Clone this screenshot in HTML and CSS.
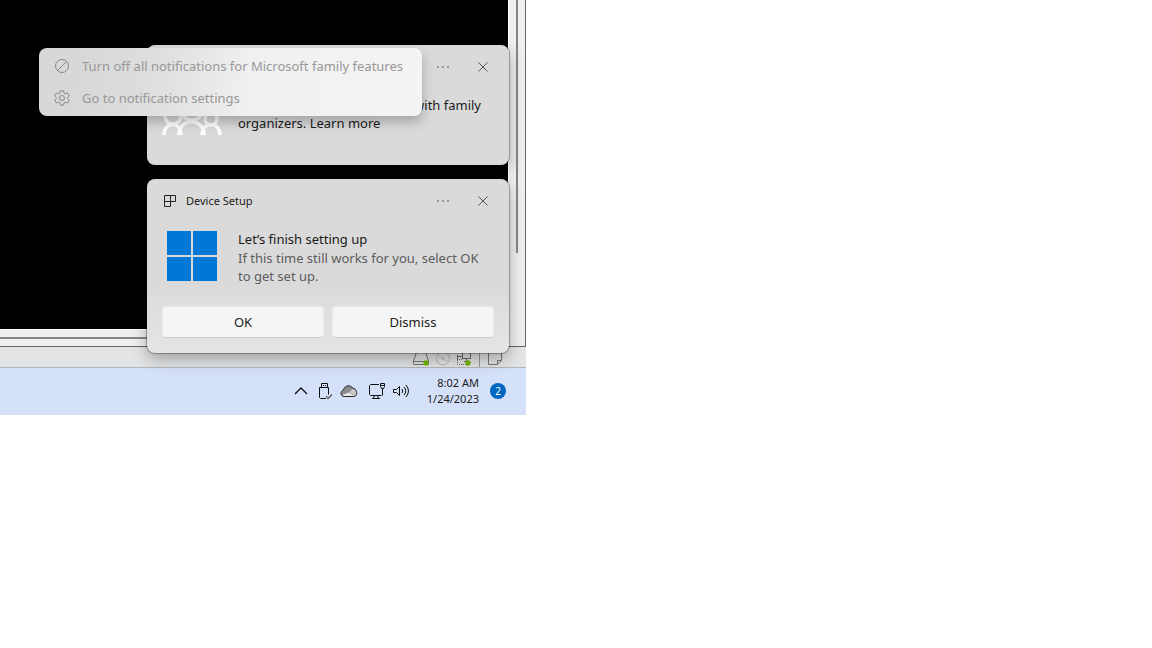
FILE: index.html
```html
<!DOCTYPE html>
<html lang="en">
<head>
  <meta charset="UTF-8" />
  <title>Desktop notifications</title>
  <link rel="stylesheet" href="styles.css">
</head>
<body>

  <div class="desktop">
    <!-- VM window -->
    <div class="vm">
      <div class="console"></div>
      <div class="vscroll"><div class="vthumb"></div></div>
      <div class="hscroll"><div class="hthumb"></div></div>
    </div>

    <div class="statusbar">
      <svg width="18" height="16" viewBox="0 0 18 16" fill="none" stroke="#777">
        <path d="M4.500 1h9l3 9v3.500h-15V10zM1.500 10.500h15" />
        <circle cx="14" cy="12" r="2.700" fill="#76b900" stroke="none" />
      </svg>
      <svg width="16" height="16" viewBox="0 0 16 16" fill="none" stroke="#b8b8b8">
        <circle cx="8" cy="7.500" r="6.500" /><circle cx="8" cy="7.500" r="1" />
        <path d="M4 5l2 1M10 9l2 1" />
      </svg>
      <svg width="16" height="16" viewBox="0 0 16 16" fill="none" stroke="#666">
        <rect x="6.500" y="1.500" width="8" height="6" />
        <path d="M10.500 7.500v3M8 10.500h5M1 5.500h5M1.500 4v3" />
        <path d="M1.500 7v6.500h9M1 8.500h6" stroke-dasharray="1 1" />
        <circle cx="12" cy="12" r="2.700" fill="#76b900" stroke="none" />
      </svg>
      <span class="divider"></span>
      <svg width="16" height="16" viewBox="0 0 16 16" fill="none" stroke="#777">
        <path d="M1.500 1.500h13v8l-4 4h-9zM14.500 9.500h-4v4" />
      </svg>
    </div>

    <div class="taskbar">
      <button class="tray" aria-label="Show hidden icons">
        <svg width="16" height="20" viewBox="0 0 16 20" fill="none" stroke="#111" stroke-width="1.300"><path d="M2 13l6-6 6 6" /></svg>
      </button>
      <button class="tray" aria-label="USB device">
        <svg width="16" height="20" viewBox="0 0 16 20" fill="none" stroke="#111">
          <path d="M4.500 6.500v-4h6v4M9 17.500H3.500l-1-1v-10h9v7" />
          <path d="M6 4.500h1M8 4.500h1" />
          <path d="M9 15l2 2.500 4-4" stroke="#555" stroke-width="1.200" />
        </svg>
      </button>
      <button class="tray" aria-label="OneDrive">
        <svg width="18" height="20" viewBox="0 0 18 20">
          <path d="M4.500 15.500C0 15.500 0 10 3.500 9 5 3.500 11 4 12.500 7c5.500 1 5.500 8.500 1 8.500z" fill="#8c8c8c" stroke="#222" />
          <path d="M2.500 14l6-2.500 6 3.300q-.500.200-1.500.200H4.500q-1.200 0-2-1z" fill="#e8e8e8" />
          <path d="M9 11.500l3.500-3.500c4 .500 4.500 4.500 2.500 6.500z" fill="#c8c8c8" />
        </svg>
      </button>
      <button class="tray network" aria-label="Network">
        <svg width="18" height="20" viewBox="0 0 18 20" fill="none" stroke="#111">
          <path d="M11 3.500H2.500l-1 1v9l1 1h11M6 14.500v3M10 14.500v3M4 17.500h8" />
          <path d="M12.500 2.500h4v3l-1 2h-2l-1-2zM12.500 4.500h4M14.500 7.500v7" />
        </svg>
      </button>
      <button class="tray" aria-label="Volume">
        <svg width="18" height="20" viewBox="0 0 18 20" fill="none" stroke="#111">
          <path d="M1.500 8.500h3l3-3v9l-3-3h-3z" />
          <path d="M10 8q1.500 2 0 4M12 6q3.500 4 0 8M14 4q5 6 0 12" />
        </svg>
      </button>
      <button class="clock">8:02 AM<br>1/24/2023</button>
      <button class="count">2</button>
    </div>

    <!-- Toasts -->
    <div class="toasts">
      <section class="toast family">
        <header class="toast-head">
          <button class="icon-btn" aria-label="Options">
            <svg width="14" height="14" viewBox="0 0 14 14" fill="#777"><circle cx="2" cy="7" r=".900" /><circle cx="7" cy="7" r=".900" /><circle cx="12" cy="7" r=".900" /></svg>
          </button>
          <button class="icon-btn" aria-label="Close">
            <svg width="14" height="14" viewBox="0 0 14 14" stroke="#555"><path d="M2.500 2.500l9 9M11.500 2.500l-9 9" /></svg>
          </button>
        </header>
        <div class="toast-body">
          <svg class="people" width="60" height="40" viewBox="0 0 60 40" fill="none" stroke="#fff" stroke-width="3.500">
            <circle cx="11" cy="21" r="8" /><circle cx="30" cy="14" r="11" /><circle cx="49" cy="24" r="6" />
            <path d="M2 40c0-14 17-14 17 0M17 40c0-18 25-18 25 0M40 40c0-14 18-14 18 0" />
          </svg>
          <p class="family-text"><span class="line-end">with family</span> organizers. Learn more</p>
        </div>
      </section>

      <section class="toast setup">
        <header class="toast-head">
          <svg class="app-icon" width="14" height="14" viewBox="0 0 14 14" fill="none" stroke="#222"><path d="M1.500 1.500h11v6h-5v5h-6zM7.500 1.500v6h-6" /></svg>
          <span class="app-name">Device Setup</span>
          <button class="icon-btn" aria-label="Options">
            <svg width="14" height="14" viewBox="0 0 14 14" fill="#777"><circle cx="2" cy="7" r=".900" /><circle cx="7" cy="7" r=".900" /><circle cx="12" cy="7" r=".900" /></svg>
          </button>
          <button class="icon-btn" aria-label="Close">
            <svg width="14" height="14" viewBox="0 0 14 14" stroke="#555"><path d="M2.500 2.500l9 9M11.500 2.500l-9 9" /></svg>
          </button>
        </header>
        <div class="toast-body">
          <svg class="logo" width="60" height="50" viewBox="0 0 60 50" fill="#0078d7"><path d="M5 0h24v24H5zM31 0h24v24H31zM5 26h24v24H5zM31 26h24v24H31z" /></svg>
          <div class="setup-text">
            <h2>Let’s finish setting up</h2>
            <p>If this time still works for you, select OK to get set up.</p>
          </div>
        </div>
        <div class="actions">
          <button>OK</button>
          <button>Dismiss</button>
        </div>
      </section>
    </div>

    <!-- Options menu over the first toast -->
    <div class="menu">
      <button>
        <svg width="16" height="16" viewBox="0 0 16 16" fill="none" stroke="#888"><circle cx="8" cy="8" r="6.500" /><path d="M3.500 12.500l9-9" /></svg>
        Turn off all notifications for Microsoft family features
      </button>
      <button>
        <svg width="16" height="16" viewBox="0 0 16 16" fill="none" stroke="#888" stroke-linejoin="round">
          <path d="M6.400.800h3.200l.500 2.200 1.400.800 2.200-.700 1.600 2.800L13.700 7.400v1.200l1.600 1.500-1.600 2.800-2.200-.700-1.400.800-.500 2.200H6.400L5.900 13l-1.400-.800-2.200.700L.700 10.100l1.600-1.500V7.400L.700 5.900l1.600-2.800 2.200.700L5.900 3z" />
          <circle cx="8" cy="8" r="2.500" />
        </svg>
        Go to notification settings
      </button>
    </div>
  </div>

</body>
</html>
```
FILE: styles.css
```css
* {
  margin: 0; padding: 0;
  box-sizing: border-box;
}
body {
  background-color: white;
  font-family: "Noto Sans", "Open Sans", sans-serif;
  font-size: 13px;
  line-height: 18px;
  color: #1b1b1b;
}
button {
  border: none;
  background: none;
  font: inherit;
  color: inherit;
}
svg {
  display: block;
  flex: none;
}
.desktop {
  position: relative;
  max-width: 526px;
  overflow: hidden;
}

/* VM window */
.vm {
  display: grid;
  grid-template-columns: 1fr 17px;
  grid-template-rows: 329px 17px;
  background-color: #efefef;
  border-right: 1px solid #666;
  border-bottom: 1px solid #666;
}
.console {
  background-color: black;
}
.vscroll, .hscroll {
  border: 0 solid white;
}
.vscroll {
  border-left-width: 1px;
  padding-left: 7px;
}
.vthumb {
  width: 2px;
  height: 253px;
  background-color: #858585;
}
.hscroll {
  border-top-width: 1px;
  padding-top: 7px;
}
.hthumb {
  width: 60%;
  height: 2px;
  background-color: #858585;
}
.statusbar {
  display: flex;
  justify-content: flex-end;
  align-items: flex-end;
  gap: 5px;
  height: 21px;
  padding: 0 23px 0 0;
  background-color: #e3e4e5;
  border-bottom: 1px solid #b0b6ba;
}
.divider {
  width: 1px;
  height: 18px;
  margin: 0 2px;
  background-color: #999;
}

/* Taskbar */
.taskbar {
  display: flex;
  justify-content: flex-end;
  align-items: center;
  height: 47px;
  padding: 0 20px 2px 0;
  background-color: #d5e1f8;
}
.tray {
  display: flex;
  justify-content: center;
  width: 24px;
}
.network {
  margin-left: 4px;
}
.clock {
  margin: 0 11px 0 14px;
  font-size: 11px;
  line-height: 16px;
  text-align: right;
}
.count {
  width: 16px;
  height: 16px;
  border-radius: 50%;
  background-color: #0067c0;
  color: white;
  font-size: 10px;
  line-height: 16px;
}

/* Toasts */
.toasts {
  position: absolute;
  top: 45px;
  right: 17px;
  width: 362px;
  display: grid;
  gap: 14px;
}
.toast {
  padding: 0 15px 15px;
  border-radius: 8px;
  background-color: #dadada;
  box-shadow: 0 0 1px 1px rgba(0, 0, 0, 0.3), 0 6px 16px rgba(0, 0, 0, 0.3);
}
.setup {
  background-image: linear-gradient(#dadada 60%, #e5e5e5);
}
.toast-head {
  display: flex;
  justify-content: flex-end;
  align-items: center;
  height: 44px;
}
.app-icon {
  margin-left: 1px;
}
.app-name {
  flex: 1;
  margin-left: 9px;
  font-size: 11px;
}
.icon-btn {
  display: flex;
  justify-content: center;
  width: 24px;
}
.icon-btn + .icon-btn {
  margin-left: 16px;
}
.toast-head .icon-btn:last-child {
  margin-right: -1px;
}
.toast-body {
  display: flex;
  gap: 16px;
  padding-top: 6px;
}
.toast-body h2 {
  font-size: 13px;
  font-weight: normal;
  line-height: 20px;
}
.toast-body p {
  color: #5c5c5c;
}
.toast-body .family-text {
  flex: 1;
  padding: 1px 13px 0 0;
  color: #1b1b1b;
}
.line-end {
  display: block;
  text-align: right;
}
.family .toast-body {
  padding-bottom: 15px;
}
.logo {
  margin-top: 2px;
}
.setup-text {
  flex: 1;
  padding-right: 8px;
}
.actions {
  display: grid;
  grid-template-columns: 1fr 1fr;
  gap: 8px;
  margin-top: 21px;
}
.actions button {
  height: 32px;
  border: 1px solid #e9e9e9;
  border-bottom-color: #ccc;
  border-radius: 4px;
  background-color: #f5f5f5;
}

/* Options menu */
.menu {
  position: absolute;
  top: 48px;
  right: 104px;
  width: 383px;
  padding: 2px 0;
  border-radius: 8px;
  background-image: linear-gradient(95deg, #d8d8d8 10%, #dedede 30%, #f0f0f0 55%, #f4f4f4);
  box-shadow: 0 6px 12px rgba(0, 0, 0, 0.25);
}
.menu button {
  display: flex;
  align-items: center;
  gap: 12px;
  height: 32px;
  padding-left: 15px;
  color: #989898;
  white-space: nowrap;
}
```
